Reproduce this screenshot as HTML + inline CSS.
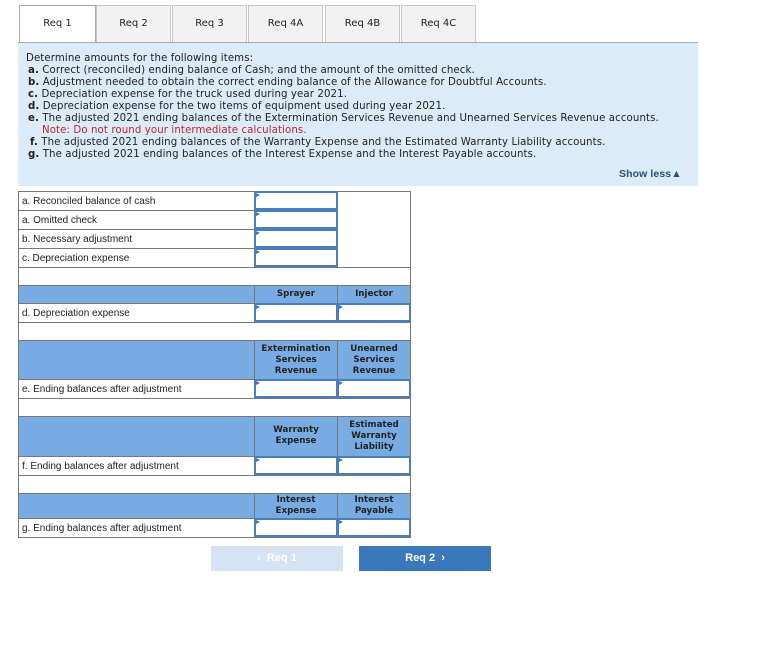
<!DOCTYPE html>
<html><head><meta charset="utf-8"><style>
body{margin:0;width:771px;height:647px;background:#fff;position:relative;font-family:"DejaVu Sans",Verdana,sans-serif;overflow:hidden}
.a{position:absolute;box-sizing:border-box}
.tab{top:5px;height:38px;border:1px solid #c8c8c8;background:#f2f2f2;font-size:10px;color:#222;text-align:center;line-height:36px;font-family:"DejaVu Sans",sans-serif}
.panel{left:18px;top:42px;width:680px;height:144px;background:#dbebf8;border-top:1px solid #aaa}
.ln{position:absolute;left:0;font-size:10.2px;color:#222;white-space:nowrap;letter-spacing:0.1px}
.c{position:absolute;box-sizing:border-box;border:1px solid #777;margin:0}
.lab{font-family:"Liberation Sans",Arial,sans-serif;font-size:10px;color:#222;padding-left:3px;background:#fff}
.hd{background:#79abe3}
.ht{font-size:8.7px;font-weight:bold;color:#222;text-align:center;line-height:11px;font-family:"DejaVu Sans",sans-serif}
.inp{background:#fff;border:2px solid #4a7dbb}
.inp:after{content:"";position:absolute;left:0;top:0;border-left:4px solid #3a77bb;border-top:2px solid transparent;border-bottom:2px solid transparent}
</style></head><body>
<div class="a tab" style="left:19px;width:77px;background:#fff;border-bottom:none;border-color:#aaa;height:38px">Req 1</div>
<div class="a tab" style="left:96px;width:75px">Req 2</div>
<div class="a tab" style="left:172px;width:75px">Req 3</div>
<div class="a tab" style="left:248px;width:75px">Req 4A</div>
<div class="a tab" style="left:325px;width:75px">Req 4B</div>
<div class="a tab" style="left:401px;width:75px">Req 4C</div>
<div class="a panel">
<div class="ln" style="left:8px;top:10px">Determine amounts for the following items:</div>
<div class="ln" style="left:10px;top:22px"><b>a.</b> Correct (reconciled) ending balance of Cash; and the amount of the omitted check.</div>
<div class="ln" style="left:10px;top:34px"><b>b.</b> Adjustment needed to obtain the correct ending balance of the Allowance for Doubtful Accounts.</div>
<div class="ln" style="left:10px;top:46px"><b>c.</b> Depreciation expense for the truck used during year 2021.</div>
<div class="ln" style="left:10px;top:58px"><b>d.</b> Depreciation expense for the two items of equipment used during year 2021.</div>
<div class="ln" style="left:10px;top:70px"><b>e.</b> The adjusted 2021 ending balances of the Extermination Services Revenue and Unearned Services Revenue accounts.</div>
<div class="ln" style="left:24px;top:82px;color:#c0272d">Note: Do not round your intermediate calculations.</div>
<div class="ln" style="left:12px;top:94px"><b>f.</b> The adjusted 2021 ending balances of the Warranty Expense and the Estimated Warranty Liability accounts.</div>
<div class="ln" style="left:10px;top:106px"><b>g.</b> The adjusted 2021 ending balances of the Interest Expense and the Interest Payable accounts.</div>
<div class="ln" style="left:601px;top:125px;font-weight:bold;color:#2b4d7a;font-family:'Liberation Sans',Arial,sans-serif;font-size:10.5px">Show less▲</div>
</div>

<div class="c" style="left:18px;top:191px;width:393px;height:347px;border-width:1px"></div>
<div class="c lab" style="left:18px;top:191px;width:237px;height:20px;line-height:19px">a. Reconciled balance of cash</div>
<div class="c lab" style="left:18px;top:210px;width:237px;height:20px;line-height:19px">a. Omitted check</div>
<div class="c lab" style="left:18px;top:229px;width:237px;height:20px;line-height:19px">b. Necessary adjustment</div>
<div class="c lab" style="left:18px;top:248px;width:237px;height:20px;line-height:19px">c. Depreciation expense</div>
<div class="c inp" style="left:254px;top:191px;width:84px;height:19px"></div>
<div class="c inp" style="left:254px;top:210px;width:84px;height:19px"></div>
<div class="c inp" style="left:254px;top:229px;width:84px;height:19px"></div>
<div class="c inp" style="left:254px;top:248px;width:84px;height:19px"></div>
<div class="c" style="left:337px;top:191px;width:74px;height:77px;border-left:none"></div>
<div class="c" style="left:18px;top:267px;width:393px;height:19px"></div>
<div class="c hd" style="left:18px;top:285px;width:237px;height:19px"></div>
<div class="c hd ht" style="left:254px;top:285px;width:84px;height:19px;line-height:16px">Sprayer</div>
<div class="c hd ht" style="left:337px;top:285px;width:74px;height:19px;line-height:16px">Injector</div>
<div class="c lab" style="left:18px;top:303px;width:237px;height:20px;line-height:19px">d. Depreciation expense</div>
<div class="c inp" style="left:254px;top:303px;width:84px;height:19px"></div>
<div class="c inp" style="left:337px;top:303px;width:74px;height:19px"></div>
<div class="c" style="left:18px;top:322px;width:393px;height:19px"></div>
<div class="c hd" style="left:18px;top:340px;width:237px;height:40px"></div>
<div class="c hd ht" style="left:254px;top:340px;width:84px;height:40px;padding-top:3px">Extermination<br>Services<br>Revenue</div>
<div class="c hd ht" style="left:337px;top:340px;width:74px;height:40px;padding-top:3px">Unearned<br>Services<br>Revenue</div>
<div class="c lab" style="left:18px;top:379px;width:237px;height:20px;line-height:19px">e. Ending balances after adjustment</div>
<div class="c inp" style="left:254px;top:379px;width:84px;height:19px"></div>
<div class="c inp" style="left:337px;top:379px;width:74px;height:19px"></div>
<div class="c" style="left:18px;top:398px;width:393px;height:19px"></div>
<div class="c hd" style="left:18px;top:416px;width:237px;height:41px"></div>
<div class="c hd ht" style="left:254px;top:416px;width:84px;height:41px;padding-top:8px">Warranty<br>Expense</div>
<div class="c hd ht" style="left:337px;top:416px;width:74px;height:41px;padding-top:3px">Estimated<br>Warranty<br>Liability</div>
<div class="c lab" style="left:18px;top:456px;width:237px;height:20px;line-height:19px">f. Ending balances after adjustment</div>
<div class="c inp" style="left:254px;top:456px;width:84px;height:19px"></div>
<div class="c inp" style="left:337px;top:456px;width:74px;height:19px"></div>
<div class="c" style="left:18px;top:475px;width:393px;height:19px"></div>
<div class="c hd" style="left:18px;top:493px;width:237px;height:26px"></div>
<div class="c hd ht" style="left:254px;top:493px;width:84px;height:26px;padding-top:1px">Interest<br>Expense</div>
<div class="c hd ht" style="left:337px;top:493px;width:74px;height:26px;padding-top:1px">Interest<br>Payable</div>
<div class="c lab" style="left:18px;top:518px;width:237px;height:20px;line-height:19px">g. Ending balances after adjustment</div>
<div class="c inp" style="left:254px;top:518px;width:84px;height:19px"></div>
<div class="c inp" style="left:337px;top:518px;width:74px;height:19px"></div>

<div class="a" style="left:211px;top:546px;width:132px;height:25px;background:#d6e3f2;color:#fff;font:bold 11px 'Liberation Sans',Arial,sans-serif;line-height:25px;text-align:center">&lsaquo;&nbsp; Req 1</div>
<div class="a" style="left:359px;top:546px;width:132px;height:25px;background:#3a77bb;color:#fff;font:bold 11px 'Liberation Sans',Arial,sans-serif;line-height:25px;text-align:center">Req 2 &nbsp;&rsaquo;</div>
</body></html>
